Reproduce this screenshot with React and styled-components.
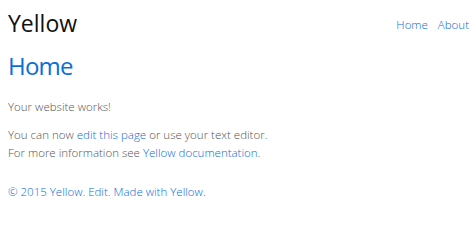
import styled, { createGlobalStyle } from "styled-components";

const GlobalStyle = createGlobalStyle`
  body {
    margin: 0;
    padding: 8px 5px 8px 8px;
    background-color: #fff;
    font-family: "Open Sans", "Liberation Sans", sans-serif;
    font-weight: 300;
    color: #555;
  }
`;

const Page = styled.div`
  display: flex;
  flex-direction: column;
`;

const Header = styled.div`
  display: flex;
  justify-content: space-between;
  align-items: flex-start;
  height: 30px;
`;

const SiteName = styled.span`
  font-size: 23px;
  line-height: 30px;
  font-weight: 400;
  color: #111;
`;

const Nav = styled.div`
  display: flex;
  gap: 10px;
  margin-top: 7px;
`;

const Link = styled.a`
  color: #0a6ed8;
  text-decoration: none;
  font-size: ${(props) => props.$size || "inherit"};
`;

const NavLink = styled(Link)`
  line-height: 20px;
`;

const Heading = styled.h1`
  margin: 11px 0 0 0;
  font-size: 24px;
  line-height: 34px;
  font-weight: 400;
  letter-spacing: -0.8px;
  color: #0a6ed8;
`;

const Paragraph = styled.p`
  margin: ${(props) => props.$gap || "10px"} 0 0 0;
  font-size: 11.5px;
  line-height: 18px;
  color: #555;
`;

const Footer = styled.div`
  margin-top: 21px;
  font-size: 11.5px;
  line-height: 18px;
  color: #0a6ed8;
`;

function App() {
  return (
    <Page>
      <GlobalStyle />
      <Header>
        <SiteName>Yellow</SiteName>
        <Nav>
          <NavLink href="#" $size="11.5px">Home</NavLink>
          <NavLink href="#" $size="11.5px">About</NavLink>
        </Nav>
      </Header>

      <Heading>Home</Heading>

      <Paragraph $gap="15px">Your website works!</Paragraph>
      <Paragraph>
        You can now <Link href="#">edit this page</Link> or use your text editor.
        <br />
        For more information see <Link href="#">Yellow documentation</Link>.
      </Paragraph>

      <Footer>© 2015 Yellow. Edit. Made with Yellow.</Footer>
    </Page>
  );
}

export default App;
